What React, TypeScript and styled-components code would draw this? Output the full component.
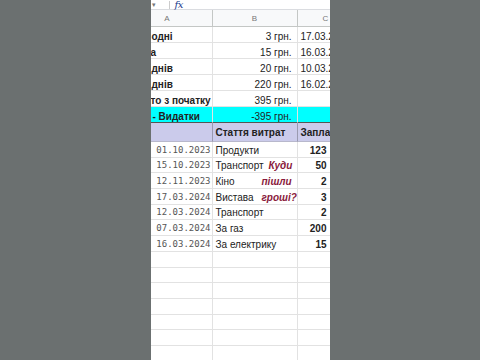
import React from "react";
import styled, { createGlobalStyle } from "styled-components";

const GlobalStyle = createGlobalStyle`
	html, body {
		margin: 0;
		padding: 0;
		background: #6b7070;
	}
	body {
		font-family: "Liberation Sans", Arial, sans-serif;
		color: #222;
	}
`;

const Page = styled.div`
	width: 480px;
	height: 360px;
	display: flex;
	justify-content: center;
	background: #6b7070;
`;

const Sheet = styled.div`
	width: 179px;
	height: 360px;
	background: #fff;
	overflow: hidden;
	display: flex;
	flex-direction: column;
`;

const FormulaBar = styled.div`
	height: 10px;
	flex: none;
	box-sizing: border-box;
	display: flex;
	align-items: flex-end;
	border-bottom: 1px solid #dadce0;
	padding-left: 1px;
	.caret {
		font-size: 7px;
		color: #777;
		width: 17px;
		line-height: 8px;
	}
	.divider {
		width: 1px;
		height: 8px;
		background: #ccc;
		margin-right: 5px;
	}
	.fx {
		font-family: "DejaVu Serif", serif;
		font-style: italic;
		font-size: 10px;
		line-height: 9px;
		color: #1a3a8c;
		letter-spacing: -0.5px;
	}
`;

const Row = styled.div<{ $h: number; $bg?: string }>`
	flex: none;
	display: grid;
	grid-template-columns: 62px 85px 32px;
	height: ${(p) => p.$h}px;
	background: ${(p) => p.$bg || "transparent"};
`;

const Cell = styled.div<{
	$align?: "left" | "right" | "center";
	$bold?: boolean;
	$line?: string;
	$bottom?: string;
}>`
	position: relative;
	box-sizing: border-box;
	overflow: hidden;
	white-space: nowrap;
	display: flex;
	align-items: flex-end;
	justify-content: ${(p) =>
		p.$align === "right" ? "flex-end" : p.$align === "center" ? "center" : "flex-start"};
	padding: 0 3px 0 3px;
	font-size: 10px;
	line-height: 11px;
	font-weight: ${(p) => (p.$bold ? 700 : 400)};
	border-right: 1px solid ${(p) => p.$line || "#e2e2e2"};
	border-bottom: 1px solid ${(p) => p.$bottom || "#e2e2e2"};
	&:last-child {
		border-right: none;
	}
`;

const HeadCell = styled(Cell)<{ $shift?: number }>`
	background: #f8f9fa;
	color: #777;
	font-size: 8px;
	align-items: center;
	padding: 0;
	border-color: #c4c7c5;
	span {
		position: relative;
		left: ${(p) => p.$shift || 0}px;
	}
`;

const Label = styled.span<{ $indent?: number }>`
	margin-left: ${(p) => p.$indent || 0}px;
`;

const DateText = styled.span`
	font-family: "DejaVu Sans Mono", "Liberation Mono", monospace;
	font-size: 9px;
	color: #555;
`;

const Note = styled.span<{ $at: number }>`
	position: absolute;
	left: ${(p) => p.$at}px;
	bottom: 0;
	font-weight: 700;
	font-style: italic;
	font-size: 10px;
	line-height: 11px;
	color: #8a1a3c;
`;

const summary = [
	{ label: "одні", indent: 0, sum: "3 грн.", date: "17.03.2024" },
	{ label: "а", indent: -1, sum: "15 грн.", date: "16.03.2024" },
	{ label: "днів", indent: 0, sum: "20 грн.", date: "10.03.2024" },
	{ label: "днів", indent: 0, sum: "220 грн.", date: "16.02.2024" },
	{ label: "то з початку", indent: -1, sum: "395 грн.", date: "" },
];

const expenses = [
	{ date: "01.10.2023", item: "Продукти", paid: "123", note: "", at: 0 },
	{ date: "15.10.2023", item: "Транспорт", paid: "50", note: "Куди", at: 56 },
	{ date: "12.11.2023", item: "Кіно", paid: "2", note: "пішли", at: 49 },
	{ date: "17.03.2024", item: "Вистава", paid: "3", note: "гроші?", at: 49 },
	{ date: "12.03.2024", item: "Транспорт", paid: "2", note: "", at: 0 },
	{ date: "07.03.2024", item: "За газ", paid: "200", note: "", at: 0 },
	{ date: "16.03.2024", item: "За електрику", paid: "15", note: "", at: 0 },
];

const App = () => {
	return (
		<Page>
			<GlobalStyle />
			<Sheet>
				<FormulaBar>
					<span className="caret">▾</span>
					<span className="divider" />
					<span className="fx">fx</span>
				</FormulaBar>
				<Row $h={17}>
					<HeadCell $align="center" $shift={-14}>
						<span>A</span>
					</HeadCell>
					<HeadCell $align="center">
						<span>B</span>
					</HeadCell>
					<HeadCell $align="left" $shift={25}>
						<span>C</span>
					</HeadCell>
				</Row>
				{summary.map((r, i) => (
					<Row $h={16} key={i}>
						<Cell $bold style={{ paddingLeft: 1 }}>
							<Label $indent={r.indent}>{r.label}</Label>
						</Cell>
						<Cell $align="right" style={{ paddingRight: 5 }}>
							{r.sum}
						</Cell>
						<Cell>{r.date}</Cell>
					</Row>
				))}
				<Row $h={16} $bg="#00ffff">
					<Cell $bold style={{ paddingLeft: 1 }} $bottom="#555">
						<Label $indent={1}>- Видатки</Label>
					</Cell>
					<Cell $align="right" style={{ paddingRight: 5 }} $bottom="#555">
						-395 грн.
					</Cell>
					<Cell $bottom="#555" />
				</Row>
				<Row $h={19} $bg="#cbcbeb">
					<Cell $line="#9a9ab0" $bottom="#b8b8cc" />
					<Cell $bold $line="#9a9ab0" $bottom="#b8b8cc" style={{ paddingBottom: 3 }}>
						Стаття витрат
					</Cell>
					<Cell $bold $bottom="#b8b8cc" style={{ paddingBottom: 3 }}>
						Заплачено
					</Cell>
				</Row>
				{expenses.map((r, i) => (
					<Row $h={15.7} key={i}>
						<Cell $align="right" style={{ paddingRight: 1, paddingBottom: 1 }}>
							<DateText>{r.date}</DateText>
						</Cell>
						<Cell style={{ paddingBottom: 1 }}>
							{r.item}
							{r.note && <Note $at={r.at} style={{ bottom: 1 }}>{r.note}</Note>}
						</Cell>
						<Cell $align="right" $bold style={{ paddingBottom: 1 }}>
							{r.paid}
						</Cell>
					</Row>
				))}
				{Array.from({ length: 8 }).map((_, i) => (
					<Row $h={15.7} key={`e${i}`}>
						<Cell />
						<Cell />
						<Cell />
					</Row>
				))}
			</Sheet>
		</Page>
	);
};

export default App;
